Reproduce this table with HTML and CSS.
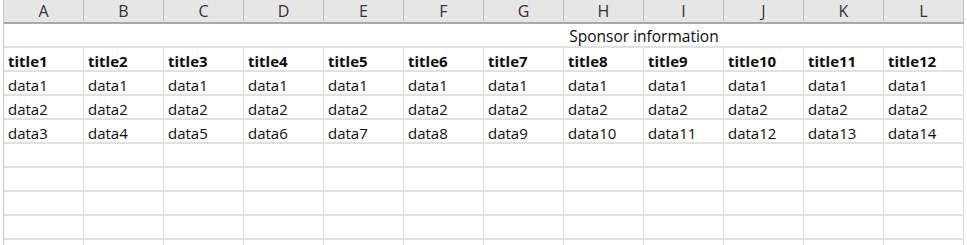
FILE: index.html
```html
<!DOCTYPE html>
<html lang="en">
<head>
  <meta charset="UTF-8">
  <title>Sponsor information</title>
  <link rel="stylesheet" href="styles.css">
</head>
<body>
  <div class="sheet">
    <div class="col-head">A</div>
    <div class="col-head">B</div>
    <div class="col-head">C</div>
    <div class="col-head">D</div>
    <div class="col-head">E</div>
    <div class="col-head">F</div>
    <div class="col-head">G</div>
    <div class="col-head">H</div>
    <div class="col-head">I</div>
    <div class="col-head">J</div>
    <div class="col-head">K</div>
    <div class="col-head">L</div>

    <!-- merged caption row -->
    <div class="merged">
      <span class="caption">Sponsor information</span>
    </div>

    <div class="cell bold">title1</div>
    <div class="cell bold">title2</div>
    <div class="cell bold">title3</div>
    <div class="cell bold">title4</div>
    <div class="cell bold">title5</div>
    <div class="cell bold">title6</div>
    <div class="cell bold">title7</div>
    <div class="cell bold">title8</div>
    <div class="cell bold">title9</div>
    <div class="cell bold">title10</div>
    <div class="cell bold">title11</div>
    <div class="cell bold">title12</div>

    <div class="cell">data1</div>
    <div class="cell">data1</div>
    <div class="cell">data1</div>
    <div class="cell">data1</div>
    <div class="cell">data1</div>
    <div class="cell">data1</div>
    <div class="cell">data1</div>
    <div class="cell">data1</div>
    <div class="cell">data1</div>
    <div class="cell">data1</div>
    <div class="cell">data1</div>
    <div class="cell">data1</div>

    <div class="cell">data2</div>
    <div class="cell">data2</div>
    <div class="cell">data2</div>
    <div class="cell">data2</div>
    <div class="cell">data2</div>
    <div class="cell">data2</div>
    <div class="cell">data2</div>
    <div class="cell">data2</div>
    <div class="cell">data2</div>
    <div class="cell">data2</div>
    <div class="cell">data2</div>
    <div class="cell">data2</div>

    <div class="cell">data3</div>
    <div class="cell">data4</div>
    <div class="cell">data5</div>
    <div class="cell">data6</div>
    <div class="cell">data7</div>
    <div class="cell">data8</div>
    <div class="cell">data9</div>
    <div class="cell">data10</div>
    <div class="cell">data11</div>
    <div class="cell">data12</div>
    <div class="cell">data13</div>
    <div class="cell">data14</div>
  </div>
  <div class="sheet" id="empty-rows"></div>

  <script>
    // blank rows under the data
    const emptyRows = document.getElementById("empty-rows");
    for (let i = 0; i < 5 * 12; i++) {
      const c = document.createElement("div");
      c.className = "cell";
      emptyRows.appendChild(c);
    }
  </script>
</body>
</html>
```

FILE: styles.css
```css
* {
  box-sizing: border-box;
  margin: 0;
  padding: 0;
}

html, body {
  height: 245px;
  overflow: hidden;
}

body {
  background: #fff;
  font-family: 'Open Sans', 'Noto Sans', sans-serif;
  color: #0d0d0d;
}

.sheet {
  display: grid;
  grid-template-columns: repeat(12, 80px);
  margin-left: 3px;
  border-left: 1px solid #c8c8c8;
  width: 961px;
}

.col-head {
  height: 24px;
  background: #e6e6e6;
  border-right: 1px solid #bcbcbc;
  border-bottom: 2px solid #a9a9a9;
  text-align: center;
  font-size: 16px;
  line-height: 23px;
  color: #333;
}

.merged {
  grid-column: 1 / 13;
  height: 24px;
  border-bottom: 2px solid #e1e1e1;
  border-right: 1px solid #dadada;
  display: grid;
  grid-template-columns: repeat(12, 80px);
}

.caption {
  grid-column: 8 / 10;
  text-align: center;
  font-size: 15.5px;
  line-height: 24px;
  white-space: nowrap;
}

.cell {
  height: 24px;
  border-right: 1px solid #dadada;
  border-bottom: 2px solid #e1e1e1;
  padding: 2px 0 0 4px;
  font-size: 15px;
  line-height: 22px;
  white-space: nowrap;
}

.bold {
  font-weight: 700;
}
```
